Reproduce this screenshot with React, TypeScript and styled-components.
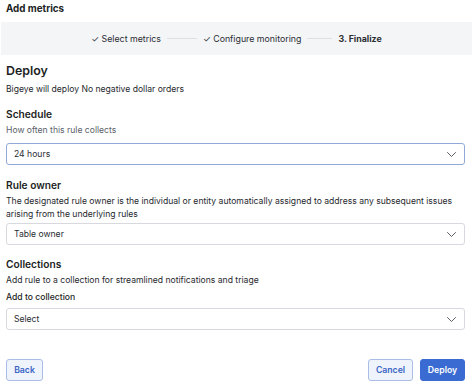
import styled, { createGlobalStyle } from 'styled-components'

const Global = createGlobalStyle`
    html, body {
        margin: 0;
        padding: 0;
        background: #fff;
    }
    body {
        font-family: Inter, 'Noto Sans', sans-serif;
        color: #1d1f24;
    }
`
const Page = styled.div`
    width: 474px;
    height: 389px;
    display: flex;
    flex-direction: column;
    box-sizing: border-box;
`
const Title = styled.h1`
    margin: 0;
    padding: 2px 6px 0;
    font-size: 9.8px;
    font-weight: 700;
    line-height: 14px;
    height: 20px;
`
const Stepper = styled.div`
    margin: 0 2px 0 1px;
    height: 33px;
    background: #f4f5f7;
    display: flex;
    align-items: center;
    justify-content: center;
    gap: 6px;
    font-size: 8.8px;
`
const Step = styled.span<{ $active?: boolean }>`
    color: #2b2d33;
    font-weight: ${(p) => (p.$active ? 700 : 400)};
    white-space: nowrap;
`
const Connector = styled.span<{ $w: number }>`
    width: ${(p) => p.$w}px;
    height: 1px;
    background: #dcdfe4;
`
const Body = styled.div`
    flex: 1;
    padding: 8px 6px 0 6px;
    display: flex;
    flex-direction: column;
`
const Heading = styled.h2`
    margin: 0;
    font-size: 12.4px;
    font-weight: 600;
    line-height: 16px;
`
const Text = styled.p<{ $muted?: boolean; $top?: number }>`
    margin: ${(p) => p.$top ?? 3}px 0 0;
    font-size: 8.6px;
    line-height: 13px;
    color: ${(p) => (p.$muted ? '#5b5f68' : '#26282d')};
`
const Section = styled.div<{ $top: number }>`
    margin-top: ${(p) => p.$top}px;
    display: flex;
    flex-direction: column;
`
const SectionTitle = styled.h3`
    margin: 0;
    font-size: 10.2px;
    font-weight: 600;
    line-height: 14px;
`
const FieldLabel = styled.label`
    margin-top: 4px;
    font-size: 8.6px;
    font-weight: 500;
    line-height: 13px;
`
const Select = styled.div<{ $focused?: boolean; $top: number }>`
    margin-top: ${(p) => p.$top}px;
    height: 22px;
    box-sizing: border-box;
    border: 1px solid ${(p) => (p.$focused ? '#91a9d9' : '#d7d9de')};
    border-radius: 3px;
    display: flex;
    align-items: center;
    justify-content: space-between;
    padding: 0 8px 0 7px;
    font-size: 8.6px;
    color: #2a2c31;
    width: 459px;
`
const Footer = styled.div`
    display: flex;
    align-items: center;
    padding: 0 9px 8px 6px;
    gap: 7px;
`
const Spacer = styled.div`
    flex: 1;
`
const Button = styled.button<{ $primary?: boolean; $w: number }>`
    height: 22px;
    width: ${(p) => p.$w}px;
    padding: 0;
    border-radius: 3px;
    font-family: Inter, sans-serif;
    font-size: 8.7px;
    font-weight: 600;
    border: 1px solid ${(p) => (p.$primary ? '#3a6bd2' : '#a9bde6')};
    background: ${(p) => (p.$primary ? '#3a6bd2' : '#eef3fc')};
    color: ${(p) => (p.$primary ? '#fff' : '#3a64c4')};
`

const Chevron = () => (
    <svg width="9" height="5" viewBox="0 0 9 5" fill="none">
        <path d="M0.5 0.5l4 4 4-4" stroke="#4a4d55" strokeWidth="0.9" strokeLinecap="round" strokeLinejoin="round" />
    </svg>
)

export default function App() {
    return (
        <Page>
            <Global />
            <Title>Add metrics</Title>
            <Stepper>
                <Step>✓ Select metrics</Step>
                <Connector $w={30} />
                <Step>✓ Configure monitoring</Step>
                <Connector $w={25} />
                <Step $active>3. Finalize</Step>
            </Stepper>
            <Body>
                <Heading>Deploy</Heading>
                <Text $top={4}>Bigeye will deploy No negative dollar orders</Text>
                <Section $top={11}>
                    <SectionTitle>Schedule</SectionTitle>
                    <Text $muted>How often this rule collects</Text>
                    <Select $focused $top={6}>
                        24 hours
                        <Chevron />
                    </Select>
                </Section>
                <Section $top={13}>
                    <SectionTitle>Rule owner</SectionTitle>
                    <Text>
                        The designated rule owner is the individual or entity automatically assigned to address any subsequent issues arising from the underlying rules
                    </Text>
                    <Select $top={2}>
                        Table owner
                        <Chevron />
                    </Select>
                </Section>
                <Section $top={12}>
                    <SectionTitle>Collections</SectionTitle>
                    <Text>Add rule to a collection for streamlined notifications and triage</Text>
                    <FieldLabel>Add to collection</FieldLabel>
                    <Select $top={4}>
                        Select
                        <Chevron />
                    </Select>
                </Section>
            </Body>
            <Footer>
                <Button $w={37}>Back</Button>
                <Spacer />
                <Button $w={45}>Cancel</Button>
                <Button $w={45} $primary>Deploy</Button>
            </Footer>
        </Page>
    )
}
